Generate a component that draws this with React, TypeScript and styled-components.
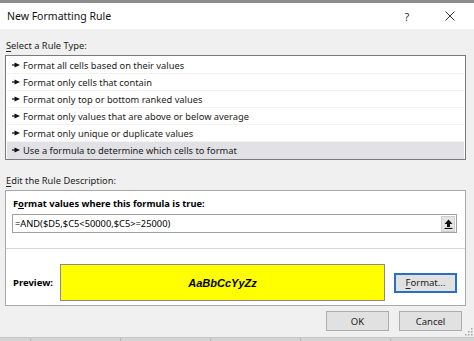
import styled, { createGlobalStyle } from "styled-components";

const GlobalStyle = createGlobalStyle`
  html, body {
    margin: 0;
    padding: 0;
    background: #d9d9d9;
  }
  body {
    font-family: "Segoe UI", "Noto Sans", "Open Sans", sans-serif;
    color: #000;
  }
`;

const Window = styled.div`
  width: 474px;
  height: 341px;
  box-sizing: border-box;
  border-top: 3px solid #8e8e8e;
  display: flex;
  flex-direction: column;
  background: #dcdcdc;
`;

const TitleBar = styled.div`
  height: 26px;
  background: #fff;
  display: flex;
  align-items: center;
  padding-left: 7px;
  font-size: 10.5px;
  color: #111;
`;

const Title = styled.div`
  flex: 1;
`;

const TitleButton = styled.div<{ $w: number }>`
  width: ${(p) => p.$w}px;
  display: flex;
  justify-content: center;
  align-items: center;
  font-size: 11px;
  color: #333;
`;

const Body = styled.div`
  background: #f0f0f0;
  padding: 8px 8px 0 5px;
  height: 308px;
  box-sizing: border-box;
  display: flex;
  flex-direction: column;
  position: relative;
`;

const SectionLabel = styled.div<{ $top?: number }>`
  font-size: 9.3px;
  line-height: 17px;
  padding-left: 1px;
  margin-top: ${(p) => p.$top ?? 0}px;
  margin-bottom: 1px;
  color: #222;
  u {
    text-decoration: underline;
    text-underline-offset: 2px;
  }
`;

const ListBox = styled.div`
  border: 1px solid #7a7a7a;
  background: #fff;
  padding: 1px 1px 0 1px;
  height: 105px;
  box-sizing: border-box;
`;

const Row = styled.div<{ $selected?: boolean }>`
  height: 17px;
  display: flex;
  align-items: center;
  gap: 3px;
  padding-left: 5px;
  font-size: 9.3px;
  color: #1a1a1a;
  background: ${(p) => (p.$selected ? "#e2e2e6" : "#fff")};
  border-bottom: 1px solid ${(p) => (p.$selected ? "#e2e2e6" : "#f2f2f2")};
  box-sizing: border-box;
`;

const DescBox = styled.div`
  border: 1px solid #a8a8a8;
  background: #fff;
  height: 116px;
  box-sizing: border-box;
  display: flex;
  flex-direction: column;
`;

const BoldLabel = styled.div`
  font-size: 9.3px;
  font-weight: bold;
  line-height: 16px;
  padding: 5px 0 1px 7px;
`;

const FormulaInput = styled.div`
  margin: 1px 8px 0 6px;
  height: 19px;
  border: 1px solid #a0a0a0;
  box-sizing: border-box;
  display: flex;
  align-items: center;
  font-size: 9.3px;
  padding-left: 2px;
`;

const FormulaText = styled.div`
  flex: 1;
`;

const CollapseButton = styled.div`
  width: 14px;
  height: 16px;
  margin-right: 1px;
  background: #e4e4e4;
  border: 1px solid #cfcfcf;
  box-sizing: border-box;
  display: flex;
  align-items: center;
  justify-content: center;
`;

const Divider = styled.div`
  margin-top: 15px;
  border-top: 1px solid #d6d6d6;
`;

const PreviewRow = styled.div`
  display: flex;
  align-items: center;
  padding: 15px 8px 0 7px;
`;

const PreviewLabel = styled.div`
  font-size: 9.5px;
  font-weight: bold;
  width: 47px;
`;

const Swatch = styled.div`
  width: 325px;
  height: 37px;
  box-sizing: border-box;
  background: #ffff00;
  border: 1px solid #8a8a8a;
  display: flex;
  align-items: center;
  justify-content: center;
  font-family: "Liberation Sans", Arial, sans-serif;
  font-weight: bold;
  font-style: italic;
  font-size: 11px;
`;

const Button = styled.div<{ $w: number; $focus?: boolean }>`
  width: ${(p) => p.$w}px;
  height: 20px;
  box-sizing: border-box;
  background: #e1e1e1;
  border: ${(p) => (p.$focus ? "2px solid #2a6fc0" : "1px solid #adadad")};
  display: flex;
  align-items: center;
  justify-content: center;
  font-size: 9.5px;
  color: #222;
  u {
    text-decoration: underline;
    text-underline-offset: 2px;
  }
`;

const FormatButton = styled(Button)`
  margin-left: auto;
`;

const Footer = styled.div`
  display: flex;
  justify-content: flex-end;
  gap: 10px;
  padding: 5px 4px 0 0;
`;

const Grip = styled.svg`
  position: absolute;
  right: 1px;
  bottom: 1px;
`;

const BottomStrip = styled.div`
  flex: 1;
  background: #d4d4d4;
  border-top: 1px solid #c4c4c4;
  background-image: repeating-linear-gradient(
    90deg,
    transparent 0 30px,
    #b8b8b8 30px 31px,
    transparent 31px 90px
  );
`;

const Arrow = () => (
  <svg width="8" height="6" viewBox="0 0 8 6">
    <path d="M0 3h4" stroke="#111" strokeWidth="1.2" />
    <path d="M2.5 0.5L8 3L2.5 5.5Z" fill="#111" />
  </svg>
);

const rules = [
  "Format all cells based on their values",
  "Format only cells that contain",
  "Format only top or bottom ranked values",
  "Format only values that are above or below average",
  "Format only unique or duplicate values",
  "Use a formula to determine which cells to format",
];

export default function App() {
  return (
    <>
      <GlobalStyle />
      <Window>
        <TitleBar>
          <Title>New Formatting Rule</Title>
          <TitleButton $w={38}>?</TitleButton>
          <TitleButton $w={48}>
            <svg width="10" height="10" viewBox="0 0 10 10">
              <path d="M0.5 0.5L9.5 9.5M9.5 0.5L0.5 9.5" stroke="#333" strokeWidth="1" />
            </svg>
          </TitleButton>
        </TitleBar>
        <Body>
          <SectionLabel>
            <u>S</u>elect a Rule Type:
          </SectionLabel>
          <ListBox>
            {rules.map((r, i) => (
              <Row key={r} $selected={i === rules.length - 1}>
                <Arrow />
                {r}
              </Row>
            ))}
          </ListBox>
          <SectionLabel $top={12}>
            <u>E</u>dit the Rule Description:
          </SectionLabel>
          <DescBox>
            <BoldLabel>
              F<u>o</u>rmat values where this formula is true:
            </BoldLabel>
            <FormulaInput>
              <FormulaText>=AND($D5,$C5&lt;50000,$C5&gt;=25000)</FormulaText>
              <CollapseButton>
                <svg width="9" height="10" viewBox="0 0 9 10">
                  <path d="M4.5 0.5L8.5 5H6V8H3V5H0.5Z" fill="#111" />
                  <path d="M0.5 9.5h8" stroke="#111" strokeWidth="1.2" />
                </svg>
              </CollapseButton>
            </FormulaInput>
            <Divider />
            <PreviewRow>
              <PreviewLabel>Preview:</PreviewLabel>
              <Swatch>AaBbCcYyZz</Swatch>
              <FormatButton $w={63} $focus>
                <u>F</u>ormat...
              </FormatButton>
            </PreviewRow>
          </DescBox>
          <Footer>
            <Button $w={63}>OK</Button>
            <Button $w={63}>Cancel</Button>
          </Footer>
          <Grip width="8" height="8" viewBox="0 0 8 8">
            <rect x="6" y="0" width="1.5" height="1.5" fill="#a0a0a0" />
            <rect x="3" y="3" width="1.5" height="1.5" fill="#a0a0a0" />
            <rect x="6" y="3" width="1.5" height="1.5" fill="#a0a0a0" />
            <rect x="0" y="6" width="1.5" height="1.5" fill="#a0a0a0" />
            <rect x="3" y="6" width="1.5" height="1.5" fill="#a0a0a0" />
            <rect x="6" y="6" width="1.5" height="1.5" fill="#a0a0a0" />
          </Grip>
        </Body>
        <BottomStrip />
      </Window>
    </>
  );
}
